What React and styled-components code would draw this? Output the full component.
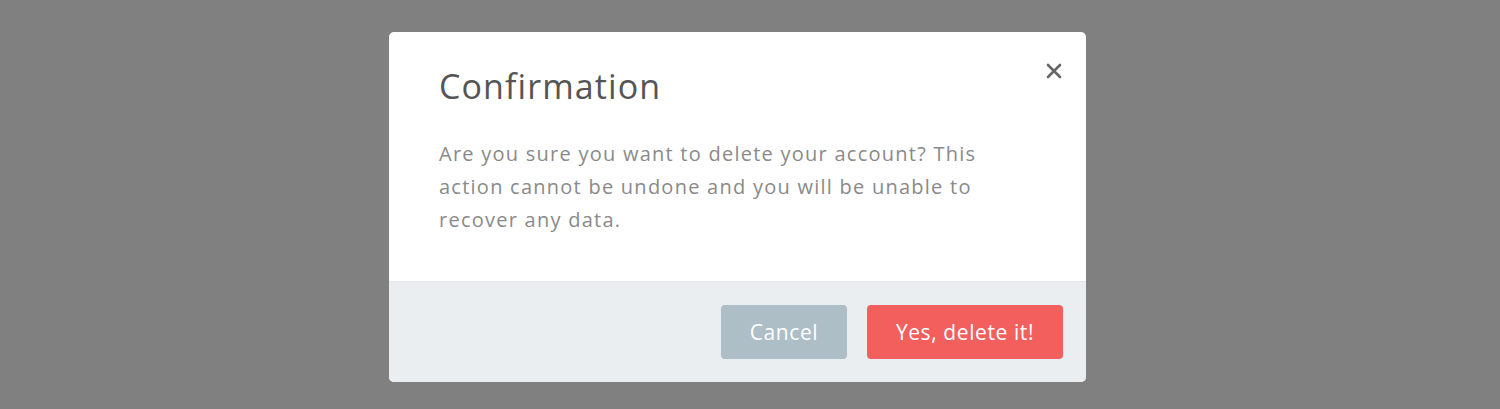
import React from "react";
import styled, { createGlobalStyle } from "styled-components";

const GlobalStyle = createGlobalStyle`
  html, body {
    margin: 0;
    padding: 0;
    background: #808080;
    font-family: "Open Sans", "Liberation Sans", sans-serif;
  }
`;

const Overlay = styled.div`
  width: 100%;
  height: 409px;
  box-sizing: border-box;
  display: flex;
  justify-content: flex-start;
  align-items: flex-start;
  padding: 32px 0 0 389px;
  background: #808080;
`;

const Modal = styled.div`
  position: relative;
  width: 697px;
  height: 350px;
  background: #fff;
  border-radius: 5px;
  overflow: hidden;
  display: flex;
  flex-direction: column;
`;

const Body = styled.div`
  flex: 1;
  padding: 33px 50px 0 50px;
`;

const Title = styled.h2`
  margin: 0 0 30px 0;
  font-size: 34px;
  font-weight: 400;
  line-height: 42px;
  color: #555;
  letter-spacing: 1.1px;
`;

const Text = styled.p`
  margin: 0;
  font-size: 20px;
  line-height: 33px;
  color: #8a8a8a;
  letter-spacing: 1.25px;
  max-width: 560px;
`;

const Close = styled.button`
  position: absolute;
  top: 29px;
  right: 22px;
  width: 20px;
  height: 20px;
  padding: 0;
  border: none;
  background: transparent;
  display: flex;
  align-items: center;
  justify-content: center;
  cursor: pointer;
`;

const Footer = styled.div`
  height: 101px;
  box-sizing: border-box;
  background: #ebeef0;
  border-top: 1px solid #e2e6e8;
  display: flex;
  justify-content: flex-end;
  align-items: center;
  gap: 20px;
  padding: 0 23px;
`;

const Button = styled.button`
  height: 54px;
  padding: 0;
  width: ${(p) => (p.$wide ? 196 : 126)}px;
  border: none;
  border-radius: 4px;
  background: ${(p) => (p.$danger ? "#f25f5c" : "#adbec6")};
  color: #fff;
  font-family: "Open Sans", "Liberation Sans", sans-serif;
  font-size: 21px;
  letter-spacing: 0.6px;
  cursor: pointer;
`;

export default function App() {
  return (
    <>
      <GlobalStyle />
      <Overlay>
        <Modal>
          <Close aria-label="Close">
            <svg width="16" height="16" viewBox="0 0 16 16">
              <path d="M2 2 L14 14 M14 2 L2 14" stroke="#666" strokeWidth="2.6" strokeLinecap="round" />
            </svg>
          </Close>
          <Body>
            <Title>Confirmation</Title>
            <Text>
              Are you sure you want to delete your account? This action cannot be undone and you will be unable to recover any data.
            </Text>
          </Body>
          <Footer>
            <Button>Cancel</Button>
            <Button $danger $wide>Yes, delete it!</Button>
          </Footer>
        </Modal>
      </Overlay>
    </>
  );
}
